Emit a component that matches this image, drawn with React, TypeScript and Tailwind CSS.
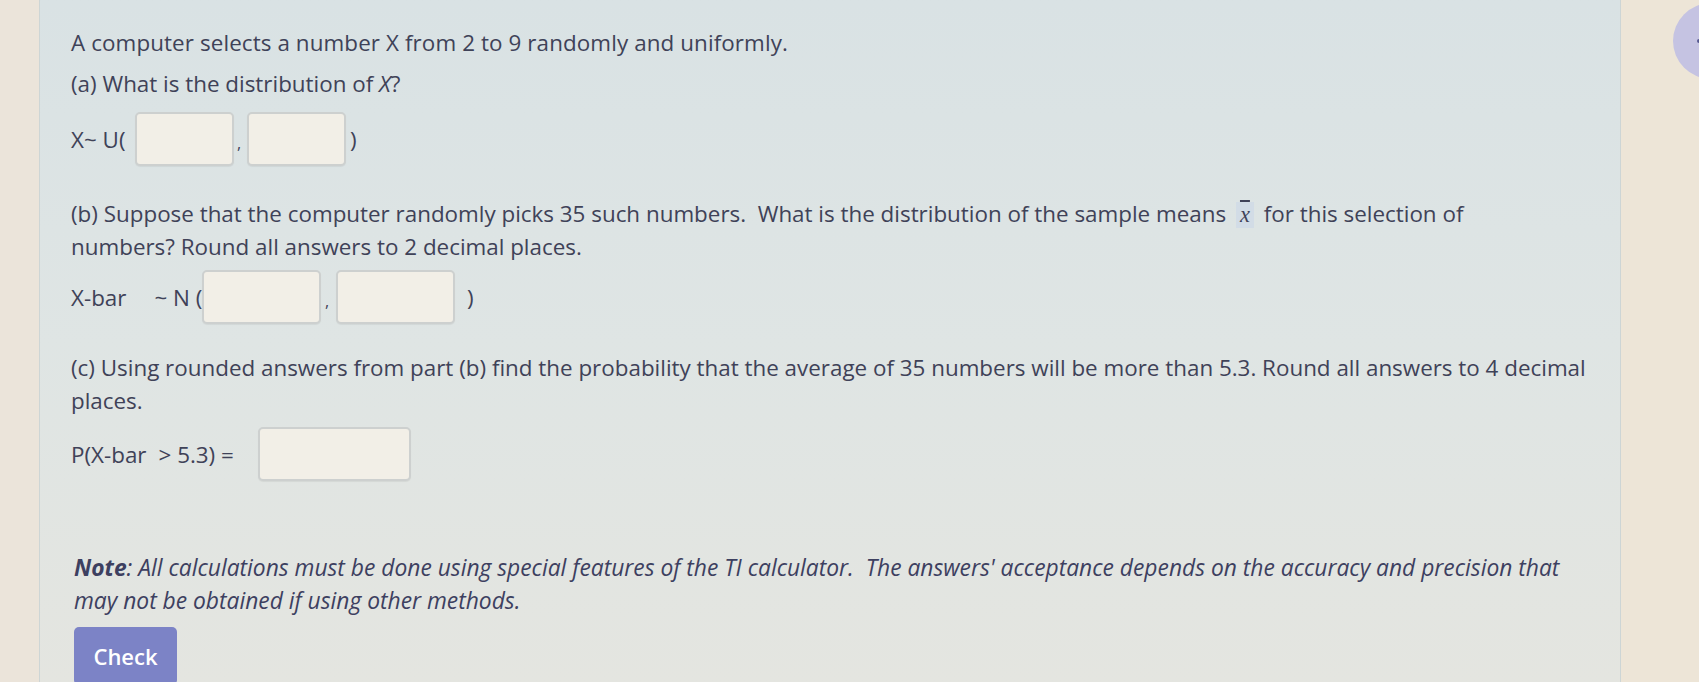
import React from "react";

function Box({ w }: { w: string }) {
  return (
    <span
      className={`inline-block h-[54px] ${w} shrink-0 rounded-[5px] border-2 border-[#cdd0cf] bg-[#f2efe7] shadow-[0_1px_1px_rgba(0,0,0,0.06)]`}
    />
  );
}

export default function App() {
  return (
    <div className="flex h-[682px] w-full overflow-hidden font-['Open_Sans',sans-serif] text-[22.4px] leading-[33px] text-[#3f4258]">
      <div className="w-[39px] shrink-0 bg-[#ebe4da]" />
      <div className="flex w-[1582px] shrink-0 flex-col border-l border-r border-[#cdd5d5] bg-gradient-to-b from-[#d9e2e4] via-[#dfe5e4] to-[#e4e5e0] pl-[31px] pt-[26px] whitespace-nowrap">
        <p className="tracking-[0.1px]">A computer selects a number X from 2 to 9 randomly and uniformly.</p>
        <p className="mt-[8px]">
          (a) What is the distribution of <i>X</i>?
        </p>
        <div className="mt-[12px] flex h-[54px] items-center">
          <span className="w-[64px] shrink-0">X~ U(</span>
          <Box w="w-[99px]" />
          <span className="w-[13px] shrink-0 self-end pb-[6px] pl-[3px] text-[16px]">,</span>
          <Box w="w-[99px]" />
          <span className="ml-[4px]">)</span>
        </div>
        <p className="mt-[31px]">
          (b) Suppose that the computer randomly picks 35 such numbers.&nbsp; What is the distribution of the sample means{" "}
          <span className="mx-[4px] inline-block bg-[#d2dce6] px-[4px] leading-[26px] font-['Liberation_Serif',serif] italic overline">
            x
          </span>{" "}
          for this selection of
          <br />
          numbers? Round all answers to 2 decimal places.
        </p>
        <div className="mt-[7px] flex h-[54px] items-center">
          <span className="flex w-[131px] shrink-0">
            <span>X-bar</span>
            <span className="ml-[28px]">~ N (</span>
          </span>
          <Box w="w-[119px]" />
          <span className="w-[15px] shrink-0 self-end pb-[6px] pl-[4px] text-[16px]">,</span>
          <Box w="w-[119px]" />
          <span className="ml-[12px]">)</span>
        </div>
        <p className="mt-[27px]">
          (c) Using rounded answers from part (b) find the probability that the average of 35 numbers will be more than 5.3. Round all answers to 4 decimal
          <br />
          places.
        </p>
        <div className="mt-[10px] flex h-[54px] items-center">
          <span className="flex w-[187px] shrink-0">
            <span>P(X-bar</span>
            <span className="ml-[12px]">&gt; 5.3) =</span>
          </span>
          <Box w="w-[153px]" />
        </div>
        <p className="mt-[70px] pl-[3px] text-[22.8px] italic text-[#3d4060]">
          <b>Note</b>: All calculations must be done using special features of the TI calculator.&nbsp; The answers' acceptance depends on the accuracy and precision that
          <br />
          may not be obtained if using other methods.
        </p>
        <div className="mt-[10px] pl-[3px]">
          <button className="flex h-[58px] w-[103px] items-center justify-center rounded-[5px] bg-[#7c83c6] text-[22px] font-semibold text-white">
            Check
          </button>
        </div>
      </div>
      <div className="flex-1 overflow-hidden bg-[#ede5d7]">
        <div className="ml-[52px] mt-[3px] flex h-[76px] w-[76px] items-center rounded-full bg-[#c5c3e2]">
          <span className="ml-[24px] h-[4px] w-[4px] rounded-full bg-[#55588f]" />
        </div>
      </div>
    </div>
  );
}
